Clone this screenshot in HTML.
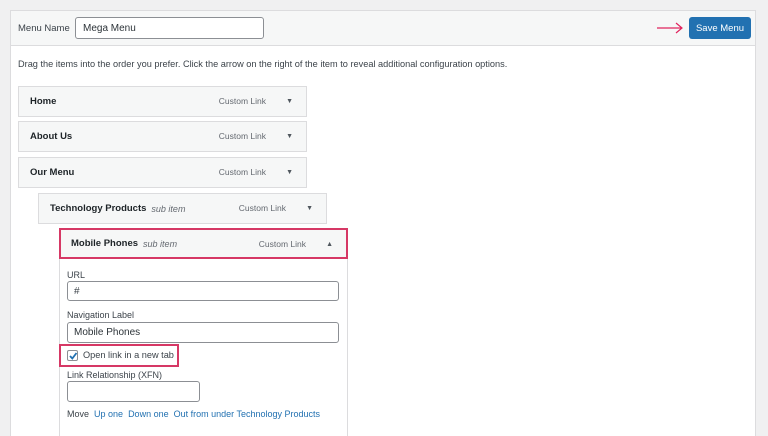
<!DOCTYPE html>
<html style="width:768px;height:436px;overflow:hidden"><head><style>
*{box-sizing:border-box;margin:0;padding:0}
body{width:768px;height:436px;overflow:hidden;background:#f0f0f1;font-family:"Liberation Sans",sans-serif;font-size:9.5px;color:#3c434a;position:relative}
.a{position:absolute}
.panel{left:10px;top:10px;width:746px;height:440px;background:#fff;border:1px solid #dcdcde}
.hdr{left:11px;top:11px;width:744px;height:35px;background:#f6f7f7;border-bottom:1px solid #dcdcde}
.inp{background:#fff;border:1px solid #8c8f94;border-radius:3px;display:flex;align-items:center;padding:0 6px}
.item{background:#f6f7f7;border:1px solid #dcdcde;height:31px;display:flex;align-items:center;padding-left:11px}
.item b{font-size:9.5px;color:#1d2327;font-weight:bold}
.item i{font-weight:normal;color:#646970;margin-left:5px;font-size:9px}
.cl{position:absolute;right:40px;top:0;line-height:29px;font-size:8.5px;color:#646970}
.tri{position:absolute;right:13px;top:0;line-height:29px;font-size:7px;color:#50575e}
a{color:#2271b1}
</style></head><body>
<div class="a panel"></div>
<div class="a hdr"></div>
<div class="a" style="left:18px;top:23px">Menu Name</div>
<div class="a inp" style="left:75px;top:17px;width:189px;height:22px;padding:0 7px;font-size:10px;color:#2c3338">Mega Menu</div>
<svg class="a" style="left:655px;top:22px" width="30" height="12"><path d="M2 6H27M21 1L27 6L21 11" stroke="#e0245e" stroke-width="1.2" fill="none"/></svg>
<div class="a" style="left:689px;top:17px;width:62px;height:22px;background:#2271b1;border-radius:3px;color:#fff;font-size:9.5px;display:flex;align-items:center;justify-content:center">Save Menu</div>
<div class="a" style="left:18px;top:59px;font-size:9.2px">Drag the items into the order you prefer. Click the arrow on the right of the item to reveal additional configuration options.</div>
<div class="a item" style="left:18px;top:86px;width:289px"><b>Home</b><span class="cl">Custom Link</span><span class="tri">▼</span></div>
<div class="a item" style="left:18px;top:121px;width:289px"><b>About Us</b><span class="cl">Custom Link</span><span class="tri">▼</span></div>
<div class="a item" style="left:18px;top:157px;width:289px"><b>Our Menu</b><span class="cl">Custom Link</span><span class="tri">▼</span></div>
<div class="a item" style="left:38px;top:193px;width:289px"><b>Technology Products</b><i>sub item</i><span class="cl">Custom Link</span><span class="tri">▼</span></div>
<div class="a" style="left:59px;top:258px;width:289px;height:190px;background:#fff;border:1px solid #dcdcde"></div>
<div class="a item" style="left:59px;top:228px;width:289px;border:2px solid #d63865;height:31px;padding-left:10px"><b>Mobile Phones</b><i>sub item</i><span class="cl">Custom Link</span><span class="tri">▲</span></div>
<div class="a" style="left:67px;top:270px;font-size:9px">URL</div>
<div class="a inp" style="left:67px;top:281px;width:272px;height:20px;font-size:10px">#</div>
<div class="a" style="left:67px;top:310px;font-size:9px">Navigation Label</div>
<div class="a inp" style="left:67px;top:322px;width:272px;height:21px;font-size:10px;color:#2c3338">Mobile Phones</div>
<div class="a" style="left:59px;top:344px;width:120px;height:23px;border:2px solid #d63865"></div>
<div class="a" style="left:67px;top:350px;width:11px;height:11px;border:1px solid #8c8f94;border-radius:2px;background:#fff"></div>
<svg class="a" style="left:68px;top:351px" width="10" height="10"><path d="M2 5L4.3 7.5L8.5 2" stroke="#2271b1" stroke-width="1.8" fill="none"/></svg>
<div class="a" style="left:83px;top:350px;font-size:9.2px">Open link in a new tab</div>
<div class="a" style="left:67px;top:370px;font-size:9px">Link Relationship (XFN)</div>
<div class="a inp" style="left:67px;top:381px;width:133px;height:21px"></div>
<div class="a" style="left:67px;top:409px;font-size:9px">Move &nbsp;<a>Up one</a>&nbsp; <a>Down one</a>&nbsp; <a>Out from under Technology Products</a></div>
</body></html>
